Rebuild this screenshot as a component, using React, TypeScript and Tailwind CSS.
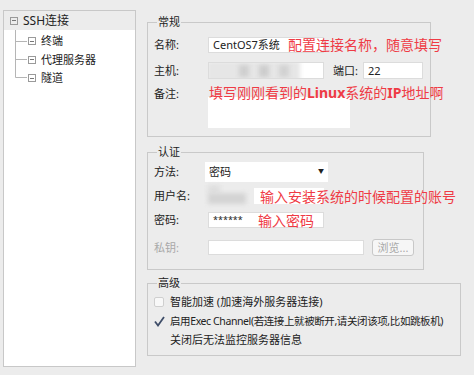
import React from "react";

const red = "text-[#ef3b45]";

function MinusBox() {
	return (
		<span className="inline-block w-[8px] h-[8px] border border-[#9a9a9a] relative shrink-0">
			<span className="absolute left-[1px] right-[1px] top-[2.5px] h-[1px] bg-[#777]"></span>
		</span>
	);
}

function TreeItem({ label }: { label: string }) {
	return (
		<div className="h-[18.5px] flex items-center pl-[24px] gap-[5px]">
			<MinusBox />
			<span>{label}</span>
		</div>
	);
}

function Label({ text, disabled }: { text: string; disabled?: boolean }) {
	return <span className={`w-[54px] shrink-0 ${disabled ? "text-[#a8a8a8]" : ""}`}>{text}</span>;
}

export default function App() {
	return (
		<div className="w-[474px] h-[375px] bg-[#ececec] relative overflow-hidden text-[11px] leading-[14px] text-[#222] font-['Noto_Sans','Noto_Sans_CJK_SC',sans-serif]">
			<div className="flex pt-[10px] pl-[3px] gap-[11px]">
				{/* left tree */}
				<div className="w-[133px] h-[357px] bg-white border border-[#c8c8c8] relative">
					<div className="h-[19px] bg-[#ececec] flex items-center pl-[6px] gap-[5px]">
						<MinusBox />
						<span className="text-[12px]">SSH连接</span>
					</div>
					<svg className="absolute left-0 top-0" width="40" height="80">
						<path d="M11.5 19 V66.5 M11.5 30.5 H23 M11.5 48.5 H23 M11.5 66.5 H23" stroke="#b5b5b5" strokeWidth="1" fill="none" />
					</svg>
					<div className="pt-[2px]">
						<TreeItem label="终端" />
						<TreeItem label="代理服务器" />
						<TreeItem label="隧道" />
					</div>
				</div>

				{/* right settings */}
				<div className="flex flex-col w-[314px]">
					<fieldset className="mt-[5px] w-[284px] border border-[#c9c9c9] pl-[6px] pb-[8px]">
						<legend className="ml-[3px] px-[1px]">常规</legend>
						<div className="flex items-center h-[16px] mt-[8px]">
							<Label text="名称:" />
							<div className="w-[116px] h-[16px] bg-white border border-[#dcdcdc] pl-[4px] flex items-center">CentOS7系统</div>
						</div>
						<div className="flex items-center h-[17px] mt-[9px]">
							<Label text="主机:" />
							<div className="w-[116px] h-[17px] bg-white border border-[#dcdcdc] relative overflow-hidden">
								<div className="absolute left-[-2px] top-[-2px] w-[93px] h-[21px] bg-[#e6e6e6] blur-[2px]"></div>
								<div className="absolute left-[30px] top-[2px] w-[10px] h-[12px] bg-[#cfcfcf] blur-[2px]"></div>
								<div className="absolute left-[50px] top-[2px] w-[10px] h-[12px] bg-[#cdcdcd] blur-[2px]"></div>
								<div className="absolute left-[70px] top-[2px] w-[10px] h-[12px] bg-[#d2d2d2] blur-[2px]"></div>
							</div>
							<span className="ml-[9px] w-[30px]">端口:</span>
							<div className="w-[60px] h-[17px] bg-white border border-[#dcdcdc] pl-[4px] flex items-center">22</div>
						</div>
						<div className="flex items-start mt-[8px]">
							<Label text="备注:" />
							<div className="w-[142px] h-[31px] bg-white mt-[10px]"></div>
						</div>
					</fieldset>

					<fieldset className="mt-[8px] w-[277px] border border-[#c9c9c9] pl-[6px] pb-[13px]">
						<legend className="ml-[3px] px-[1px]">认证</legend>
						<div className="flex items-center h-[20px] mt-[3px]">
							<Label text="方法:" />
							<div className="ml-[-3px] w-[123px] h-[20px] bg-white flex items-center pl-[4px] relative">
								密码
								<span className="absolute right-[4px] top-[4px] text-[6px] leading-[10px]">▼</span>
							</div>
						</div>
						<div className="flex items-center h-[16px] mt-[6px]">
							<Label text="用户名:" />
							<div className="w-[116px] h-[16px] bg-white relative">
								<div className="absolute left-[-2px] top-[-4px] w-[48px] h-[26px] bg-[#ececec]"></div>
								<div className="absolute left-[0px] top-[-3px] w-[12px] h-[8px] bg-[#dedede] blur-[2px]"></div>
								<div className="absolute left-[0px] top-[5px] w-[38px] h-[11px] bg-[#d4d4d4] blur-[2px]"></div>
							</div>
						</div>
						<div className="flex items-center h-[16px] mt-[8px]">
							<Label text="密码:" />
							<div className="w-[116px] h-[16px] bg-white border border-[#dcdcdc] pl-[4px] flex items-center text-[9px]">******</div>
						</div>
						<div className="flex items-center h-[17px] mt-[11px]">
							<Label text="私钥:" disabled />
							<div className="w-[156px] h-[15px] bg-white border border-[#dcdcdc]"></div>
							<button className="ml-[8px] w-[42px] h-[17px] rounded-[3px] border border-[#c8c8c8] bg-[#f6f6f6] text-[#a8a8a8] text-[11px] leading-[14px]">浏览...</button>
						</div>
					</fieldset>

					<fieldset className="mt-[6px] w-[314px] border border-[#c9c9c9] pl-[6px] pb-[7px]">
						<legend className="ml-[3px] px-[1px]">高级</legend>
						<div className="flex items-center h-[16px] mt-[4px]">
							<span className="w-[10px] h-[10px] border border-[#cfcfcf] bg-[#f8f8f8] rounded-[2px] shrink-0"></span>
							<span className="ml-[6px]">智能加速 (加速海外服务器连接)</span>
						</div>
						<div className="flex items-center h-[16px] mt-[3px]">
							<svg width="11" height="11" viewBox="0 0 11 11" className="shrink-0">
								<path d="M1 5.5 L4 9.5 L10 1" stroke="#3e4d68" strokeWidth="1.8" fill="none" />
							</svg>
							<span className="ml-[5px] whitespace-nowrap text-[10.5px] tracking-[-0.4px]">启用Exec Channel(若连接上就被断开,请关闭该项,比如跳板机)</span>
						</div>
						<div className="flex items-center h-[16px] mt-[3px] pl-[16px]">关闭后无法监控服务器信息</div>
					</fieldset>
				</div>
			</div>

			{/* red annotations */}
			<div className={`absolute left-[288px] top-[36px] text-[14px] leading-[18px] ${red}`}>配置连接名称，随意填写</div>
			<div className={`absolute left-[209px] top-[84px] text-[14px] leading-[18px] ${red}`}>
				填写刚刚看到的<b>Linux</b>系统的<b>IP</b>地址啊
			</div>
			<div className={`absolute left-[260px] top-[188px] text-[14px] leading-[18px] ${red}`}>输入安装系统的时候配置的账号</div>
			<div className={`absolute left-[258px] top-[212px] text-[14px] leading-[18px] ${red}`}>输入密码</div>
		</div>
	);
}
